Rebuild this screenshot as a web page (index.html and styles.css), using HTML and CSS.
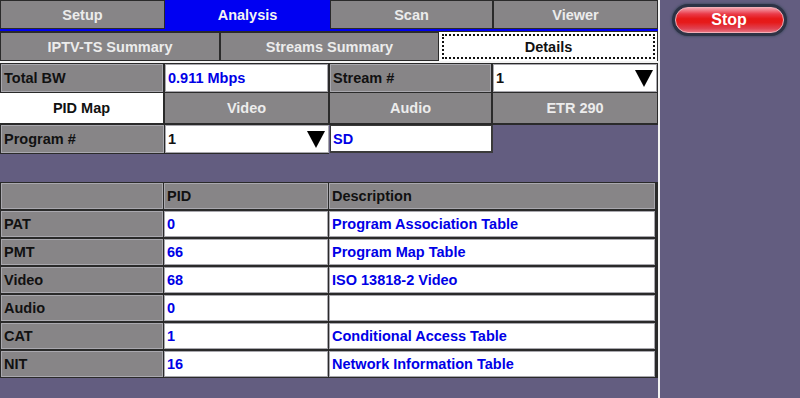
FILE: index.html
```html
<!DOCTYPE html>
<html>
<head>
<meta charset="utf-8">
<link rel="stylesheet" href="styles.css">
</head>
<body>
<div class="screen">
  <div class="panel">
    <div class="tabs">
      <div class="tab">Setup</div>
      <div class="tab active">Analysis</div>
      <div class="tab">Scan</div>
      <div class="tab">Viewer</div>
    </div>
    <div class="blueline"></div>
    <div class="subtabs">
      <div class="subtab">IPTV-TS Summary</div>
      <div class="subtab">Streams Summary</div>
      <div class="subtab selected"><span class="dotted">Details</span></div>
    </div>
    <div class="row4 info">
      <div class="cell label">Total BW</div>
      <div class="cell value">0.911 Mbps</div>
      <div class="cell label">Stream #</div>
      <div class="cell value drop"><span class="black">1</span><span class="arrow"></span></div>
    </div>
    <div class="row4 pidtabs">
      <div class="ptab on">PID Map</div>
      <div class="ptab">Video</div>
      <div class="ptab">Audio</div>
      <div class="ptab">ETR 290</div>
    </div>
    <div class="prog">
      <div class="cell label">Program #</div>
      <div class="cell value drop"><span class="black">1</span><span class="arrow"></span></div>
      <div class="cell value sd">SD</div>
    </div>
    <div class="gap"></div>
    <div class="table">
      <div class="trow">
        <div class="cell label"></div>
        <div class="cell label">PID</div>
        <div class="cell label">Description</div>
      </div>
      <div class="trow">
        <div class="cell label">PAT</div>
        <div class="cell value">0</div>
        <div class="cell value">Program Association Table</div>
      </div>
      <div class="trow">
        <div class="cell label">PMT</div>
        <div class="cell value">66</div>
        <div class="cell value">Program Map Table</div>
      </div>
      <div class="trow">
        <div class="cell label">Video</div>
        <div class="cell value">68</div>
        <div class="cell value">ISO 13818-2 Video</div>
      </div>
      <div class="trow">
        <div class="cell label">Audio</div>
        <div class="cell value">0</div>
        <div class="cell value"></div>
      </div>
      <div class="trow">
        <div class="cell label">CAT</div>
        <div class="cell value">1</div>
        <div class="cell value">Conditional Access Table</div>
      </div>
      <div class="trow">
        <div class="cell label">NIT</div>
        <div class="cell value">16</div>
        <div class="cell value">Network Information Table</div>
      </div>
    </div>
  </div>
  <div class="side">
    <div class="stop"><span>Stop</span></div>
  </div>
</div>
</body>
</html>
```
FILE: styles.css
```css
* { box-sizing: border-box; }
html, body { margin: 0; padding: 0; }
body {
  width: 800px;
  height: 398px;
  overflow: hidden;
  background: #635d80;
  font-family: "Liberation Sans", Arial, sans-serif;
  font-weight: bold;
  font-size: 14.5px;
}
.screen { display: flex; height: 398px; }
.panel {
  width: 660px;
  border-right: 2px solid #f2f2f2;
  display: flex;
  flex-direction: column;
}
.side { flex: 1; display: flex; justify-content: center; padding-top: 4px; padding-right: 2px; }

.tabs {
  display: grid;
  grid-template-columns: 165px 165px 163px 165px;
  height: 29px;
  background: #2a2a2a;
}
.tab {
  background: #878587;
  color: #ececec;
  margin: 1px;
  display: flex; align-items: center; justify-content: center;
}
.tab.active { background: #0000f2; margin: 0; color: #f4f4f4; }
.blueline { height: 3px; background: #0000f2; border-bottom: 1px solid #2a2a2a; }

.subtabs {
  display: grid;
  grid-template-columns: 220px 219px 219px;
  height: 31px;
  background: #2a2a2a;
  border-bottom: 2px solid #f4f4f4;
}
.subtab {
  background: #878587;
  color: #ececec;
  margin: 1px;
  display: flex; align-items: center; justify-content: center;
}
.subtab.selected { background: #fff; color: #111; margin: 0 1px 0 0; padding: 2px 2px 2px 3px; }
.dotted {
  flex: 1; align-self: stretch;
  border: 2px dotted #111;
  display: flex; align-items: center; justify-content: center;
}

.row4 {
  display: grid;
  grid-template-columns: 164px 165px 163px 166px;
  background: #2a2a2a;
}
.info { height: 30px; padding: 1px 0; }
.cell {
  display: flex; align-items: center;
  padding-left: 2px;
  margin: 0 1px;
  border: 1px solid #a9a8ae;
}
.label { background: #878587; color: #111; }
.value { background: #fff; color: #0000e6; }
.black { color: #111; }
.drop { justify-content: space-between; padding-right: 3px; }
.arrow {
  width: 0; height: 0;
  border-left: 9px solid transparent;
  border-right: 9px solid transparent;
  border-top: 17px solid #000;
}

.pidtabs { height: 32px; padding-bottom: 2px; }
.ptab {
  background: #878587; color: #ececec;
  display: flex; align-items: center; justify-content: center;
  margin: 0 1px;
}
.ptab.on { background: #fff; color: #111; margin: 0 1px 0 0; }

.prog {
  display: grid;
  grid-template-columns: 164px 165px 163px;
  height: 29px;
  width: 329px;
  background: #2a2a2a;
  padding: 0 0 1px 1px;
  overflow: visible;
}
.prog > .cell { margin: 0 1px 0 0; }
.prog > .sd {
  margin: 0;
  border-color: #3a3a3a;
  border-width: 1px 2px 2px 1px;
  width: 163px;
}

.gap { height: 28px; }

.table {
  background: #2a2a2a;
  padding: 1px 2px 1px 1px;
  display: flex; flex-direction: column; gap: 2px;
  width: 658px;
}
.trow {
  display: grid;
  grid-template-columns: 163px 165px 327px;
  height: 26px;
}
.trow .cell { margin: 0 1px 0 0; }

.stop {
  width: 115px; height: 32px;
  border-radius: 16px;
  background: #2d3346;
  padding: 3px;
  box-shadow: 0 0 2px 1px #4a5068;
}
.stop span {
  display: flex; align-items: center; justify-content: center;
  height: 100%;
  border-radius: 13px;
  border: 1px solid #f4b0b8;
  background: linear-gradient(#f4a0ac 0%, #ea3a48 25%, #e61818 45%, #e61a1a 60%, #e04050 85%, #e8707c 100%);
  color: #fff;
  font-size: 16px;
}
```
